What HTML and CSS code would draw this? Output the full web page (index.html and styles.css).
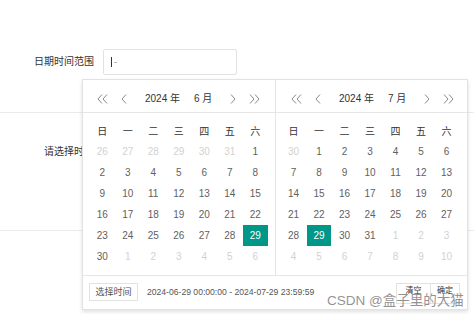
FILE: index.html
```html
<!DOCTYPE html>
<html lang="zh">
<head>
<meta charset="utf-8">
<title>laydate</title>
<link rel="stylesheet" href="styles.css">
</head>
<body>
<div class="page">
  <div class="form-row row1">
    <label class="form-label">日期时间范围</label>
    <div class="input"><span class="caret"></span><span class="dash">-</span></div>
  </div>
  <div class="form-row row2">
    <label class="form-label">请选择时间</label>
  </div>

  <div class="laydate">
    <div class="panels">
      <div class="panel panel-left">
        <div class="header">
          <svg class="ico dbl" width="11" height="10" viewBox="0 0 11 10"><path d="M5 0.5 L1 5 L5 9.5 M10 0.5 L6 5 L10 9.5"/></svg>
          <svg class="ico sgl prev" width="6" height="10" viewBox="0 0 6 10"><path d="M5 0.5 L1 5 L5 9.5"/></svg>
          <span class="ym year">2024 年</span>
          <span class="ym month">6 月</span>
          <svg class="ico sgl next" width="6" height="10" viewBox="0 0 6 10"><path d="M1 0.5 L5 5 L1 9.5"/></svg>
          <svg class="ico dbl dnext" width="11" height="10" viewBox="0 0 11 10"><path d="M1 0.5 L5 5 L1 9.5 M6 0.5 L10 5 L6 9.5"/></svg>
        </div>
        <div class="grid">
          <span class="wk">日</span><span class="wk">一</span><span class="wk">二</span><span class="wk">三</span><span class="wk">四</span><span class="wk">五</span><span class="wk">六</span>
          <span class="d o">26</span><span class="d o">27</span><span class="d o">28</span><span class="d o">29</span><span class="d o">30</span><span class="d o">31</span><span class="d">1</span>
          <span class="d">2</span><span class="d">3</span><span class="d">4</span><span class="d">5</span><span class="d">6</span><span class="d">7</span><span class="d">8</span>
          <span class="d">9</span><span class="d">10</span><span class="d">11</span><span class="d">12</span><span class="d">13</span><span class="d">14</span><span class="d">15</span>
          <span class="d">16</span><span class="d">17</span><span class="d">18</span><span class="d">19</span><span class="d">20</span><span class="d">21</span><span class="d">22</span>
          <span class="d">23</span><span class="d">24</span><span class="d">25</span><span class="d">26</span><span class="d">27</span><span class="d">28</span><span class="d sel">29</span>
          <span class="d">30</span><span class="d o">1</span><span class="d o">2</span><span class="d o">3</span><span class="d o">4</span><span class="d o">5</span><span class="d o">6</span>
        </div>
      </div>
      <div class="panel panel-right">
        <div class="header">
          <svg class="ico dbl" width="11" height="10" viewBox="0 0 11 10"><path d="M5 0.5 L1 5 L5 9.5 M10 0.5 L6 5 L10 9.5"/></svg>
          <svg class="ico sgl prev" width="6" height="10" viewBox="0 0 6 10"><path d="M5 0.5 L1 5 L5 9.5"/></svg>
          <span class="ym year">2024 年</span>
          <span class="ym month">7 月</span>
          <svg class="ico sgl next" width="6" height="10" viewBox="0 0 6 10"><path d="M1 0.5 L5 5 L1 9.5"/></svg>
          <svg class="ico dbl dnext" width="11" height="10" viewBox="0 0 11 10"><path d="M1 0.5 L5 5 L1 9.5 M6 0.5 L10 5 L6 9.5"/></svg>
        </div>
        <div class="grid">
          <span class="wk">日</span><span class="wk">一</span><span class="wk">二</span><span class="wk">三</span><span class="wk">四</span><span class="wk">五</span><span class="wk">六</span>
          <span class="d o">30</span><span class="d">1</span><span class="d">2</span><span class="d">3</span><span class="d">4</span><span class="d">5</span><span class="d">6</span>
          <span class="d">7</span><span class="d">8</span><span class="d">9</span><span class="d">10</span><span class="d">11</span><span class="d">12</span><span class="d">13</span>
          <span class="d">14</span><span class="d">15</span><span class="d">16</span><span class="d">17</span><span class="d">18</span><span class="d">19</span><span class="d">20</span>
          <span class="d">21</span><span class="d">22</span><span class="d">23</span><span class="d">24</span><span class="d">25</span><span class="d">26</span><span class="d">27</span>
          <span class="d">28</span><span class="d sel">29</span><span class="d">30</span><span class="d">31</span><span class="d o">1</span><span class="d o">2</span><span class="d o">3</span>
          <span class="d o">4</span><span class="d o">5</span><span class="d o">6</span><span class="d o">7</span><span class="d o">8</span><span class="d o">9</span><span class="d o">10</span>
        </div>
      </div>
    </div>
    <div class="footer">
      <span class="btn btn-time">选择时间</span>
      <span class="range">2024-06-29 00:00:00 - 2024-07-29 23:59:59</span>
      <div class="btn-group">
        <span class="btn btn-sm">清空</span>
        <span class="btn btn-sm">确定</span>
      </div>
    </div>
  </div>

  <div class="watermark">CSDN @盒子里的大猫</div>
</div>
</body>
</html>
```

FILE: styles.css
```css
* { box-sizing: border-box; }
html, body { margin: 0; padding: 0; background: #fff; }
body {
  font-family: "Liberation Sans", "Noto Sans CJK SC", sans-serif;
  font-size: 10px;
  color: #333;
}
.page {
  position: relative;
  width: 474px;
  height: 314px;
  overflow: hidden;
}
.form-row {
  display: flex;
  align-items: flex-start;
  border-bottom: 1px solid #ebebeb;
}
.row1 { height: 113px; padding-top: 49px; }
.row2 { height: 118px; padding-top: 29px; }
.form-label {
  width: 94px;
  text-align: right;
  line-height: 26px;
  font-size: 10px;
  color: #333;
}
.row2 .form-label { line-height: 20px; }
.input {
  margin-left: 9px;
  width: 134px;
  height: 26px;
  border: 1px solid #e2e2e2;
  border-radius: 2px;
  display: flex;
  align-items: center;
  padding-left: 7px;
}
.caret {
  width: 1px;
  height: 10px;
  background: #333;
}
.dash {
  margin-left: 2px;
  color: #888;
  font-size: 9px;
  line-height: 10px;
}

.laydate {
  position: absolute;
  left: 82px;
  top: 79px;
  width: 386px;
  height: 231px;
  background: #fff;
  border: 1px solid #e2e2e2;
  box-shadow: 0 2px 4px rgba(0, 0, 0, 0.12);
  display: flex;
  flex-direction: column;
}
.panels { display: flex; }
.panel-left { width: 193px; border-right: 1px solid #e6e6e6; }
.panel-right { flex: 1; }
.header {
  height: 33px;
  border-bottom: 1px solid #e6e6e6;
  padding-top: 6px;
  display: flex;
  align-items: center;
}
.panel-left .header { padding-left: 14px; }
.panel-right .header { padding-left: 15px; }
.ico { display: block; flex: none; }
.ico path { fill: none; stroke: #8a8a8a; stroke-width: 1; }
.sgl.prev { margin-left: 13px; }
.year { margin-left: 18px; }
.month { margin-left: 14px; }
.sgl.next { margin-left: 18px; }
.dnext { margin-left: 13px; }
.ym { color: #333; font-size: 10px; line-height: 12px; white-space: nowrap; }

.grid {
  display: grid;
  grid-template-columns: repeat(7, 25.5px);
  grid-auto-rows: 21px;
  padding-top: 7px;
  height: 162px;
}
.panel-left .grid { padding-left: 6.5px; }
.panel-right .grid { padding-left: 4.8px; }
.wk, .d {
  display: flex;
  align-items: center;
  justify-content: center;
  font-size: 10px;
}
.wk { color: #333; }
.d { color: #5f5f5f; }
.d.o { color: #d2d2d2; }
.d.sel {
  background: #009688;
  color: #fff;
  margin: 0 0.5px;
}

.footer {
  flex: 1;
  border-top: 1px solid #e6e6e6;
  display: flex;
  align-items: flex-start;
  padding: 6px 7px 0 6px;
}
.btn {
  border: 1px solid #e2e2e2;
  background: #fff;
  color: #555;
  white-space: nowrap;
}
.btn-time {
  width: 49px;
  height: 18px;
  font-size: 9px;
  line-height: 16px;
  text-align: center;
  margin-top: 1px;
}
.range {
  margin-left: 9px;
  font-size: 8.6px;
  line-height: 20px;
  color: #555;
  white-space: nowrap;
}
.btn-group {
  margin-left: auto;
  display: flex;
  margin-top: 1px;
}
.btn-sm {
  height: 21px;
  font-size: 8px;
  line-height: 13px;
  text-align: center;
  color: #333;
}
.btn-sm:first-child { width: 35px; }
.btn-sm + .btn-sm { width: 29px; border-left: none; }

.watermark {
  position: absolute;
  left: 327px;
  top: 292px;
  font-size: 13.5px;
  line-height: 18px;
  color: rgba(110, 110, 110, 0.75);
  white-space: nowrap;
}
```
